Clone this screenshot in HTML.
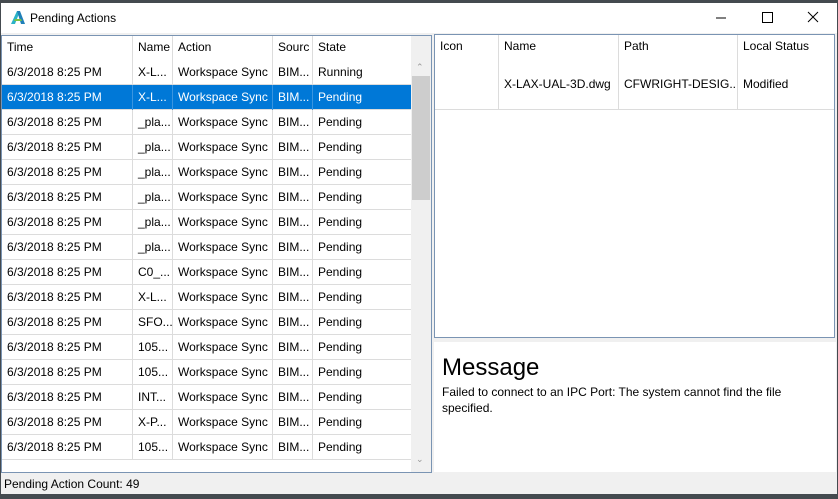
<!DOCTYPE html>
<html><head><style>
*{margin:0;padding:0;box-sizing:border-box}
body{width:838px;height:499px;background:#444a4f;font-family:"Liberation Sans",sans-serif;font-size:12px;color:#000;position:relative;overflow:hidden}
.win{position:absolute;left:1px;top:3px;width:836px;height:491px;background:#f0f0f0}
.title{position:absolute;left:0;top:0;width:836px;height:30px;background:#fff}
.title span{position:absolute;left:29px;top:8px;font-size:12px}
.ab{position:absolute;top:0;height:30px;width:46px}
.list{position:absolute;left:0;top:32px;width:431px;height:438px;border:1px solid #7a94b3;background:#fff;overflow:hidden}
.row{position:absolute;left:0;height:25px;width:409px;border-bottom:1px solid #dcdcdc}
.c{position:absolute;top:0;height:25px;line-height:24px;padding-left:5px;border-right:1px solid #dcdcdc;white-space:nowrap;overflow:hidden}
.hdr .c{background:#fff;line-height:22px}
.sel{background:#0078d7;color:#fff}
.sel .c{border-right-color:#3a95e0}
.sb{position:absolute;left:409px;top:0;width:20px;height:436px;background:#f0f0f0}
.grid{position:absolute;left:434px;top:34px;width:401px;height:304px;border:1px solid #7a94b3;background:#fff}
.msg{position:absolute;left:434px;top:342px;width:402px;height:130px;background:#fff}
.status{position:absolute;left:4px;top:477px;font-size:12px}
</style></head><body>
<div class="win">
<div class="title">
<svg style="position:absolute;left:9px;top:7px" width="16" height="15" viewBox="0 0 16 15"><path d="M1 14 L7 1 L10 1 L5 14Z" fill="#2bb3c8"/><path d="M7 1 L10 1 L15 14 L11 14Z" fill="#1f7fb8"/><path d="M4 11 L12 11 L11 9 L5 9Z" fill="#7cc242"/></svg>
<span>Pending Actions</span>
<svg class="ab" style="left:697px" viewBox="0 0 46 30"><line x1="18" y1="15" x2="28" y2="15" stroke="#000"/></svg>
<svg class="ab" style="left:743px" viewBox="0 0 46 30"><rect x="18.5" y="9.5" width="10" height="10" fill="none" stroke="#000"/></svg>
<svg class="ab" style="left:789px" viewBox="0 0 46 30"><path d="M18 9L28 19M28 9L18 19" stroke="#000"/></svg>
</div>
</div>
<div class="list" style="left:1px;top:35px">
<div class="row hdr" style="top:0;height:24px"><div class="c" style="left:0;width:131px">Time</div><div class="c" style="left:131px;width:40px">Name</div><div class="c" style="left:171px;width:100px">Action</div><div class="c" style="left:271px;width:40px">Sourc</div><div class="c" style="left:311px;width:98px;border-right:none">State</div></div>
<div id="rows"></div>
<div class="sb"><div style="position:absolute;left:1px;top:40px;width:18px;height:124px;background:#cdcdcd"></div><div style="position:absolute;left:5px;top:26px;color:#999;font-size:9px">&#8963;</div><div style="position:absolute;left:5px;top:418px;color:#999;font-size:9px">&#8964;</div></div>
</div>
<div class="grid">
<div class="row hdr" style="top:0;width:399px;height:24px"><div class="c" style="left:0;width:64px">Icon</div><div class="c" style="left:64px;width:120px">Name</div><div class="c" style="left:184px;width:119px">Path</div><div class="c" style="left:303px;width:96px;border-right:none">Local Status</div></div>
<div class="row" style="top:24px;width:399px;height:51px"><div class="c" style="left:0;width:64px;height:51px"></div><div class="c" style="left:64px;width:120px;height:51px;line-height:50px">X-LAX-UAL-3D.dwg</div><div class="c" style="left:184px;width:119px;height:51px;line-height:50px">CFWRIGHT-DESIG...</div><div class="c" style="left:303px;width:96px;height:51px;line-height:50px;border-right:none">Modified</div></div>
</div>
<div class="msg"><div style="position:absolute;left:8px;top:12px;font-size:24px">Message</div><div style="position:absolute;left:8px;top:42px;font-size:12px;line-height:16px;width:380px">Failed to connect to an IPC Port: The system cannot find the file specified.</div></div>
<div class="status">Pending Action Count: 49</div>
<script>
var n=["X-L...","X-L...","_pla...","_pla...","_pla...","_pla...","_pla...","_pla...","C0_...","X-L...","SFO...","105...","105...","INT...","X-P...","105..."];
var h="";for(var i=0;i<16;i++){var t=24+i*25;h+='<div class="row'+(i==1?' sel':'')+'" style="top:'+t+'px"><div class="c" style="left:0;width:131px">6/3/2018 8:25 PM</div><div class="c" style="left:131px;width:40px">'+n[i]+'</div><div class="c" style="left:171px;width:100px">Workspace Sync</div><div class="c" style="left:271px;width:40px">BIM...</div><div class="c" style="left:311px;width:98px;border-right:none">'+(i==0?'Running':'Pending')+'</div></div>';}
document.getElementById("rows").innerHTML=h;
</script>
</body></html>
